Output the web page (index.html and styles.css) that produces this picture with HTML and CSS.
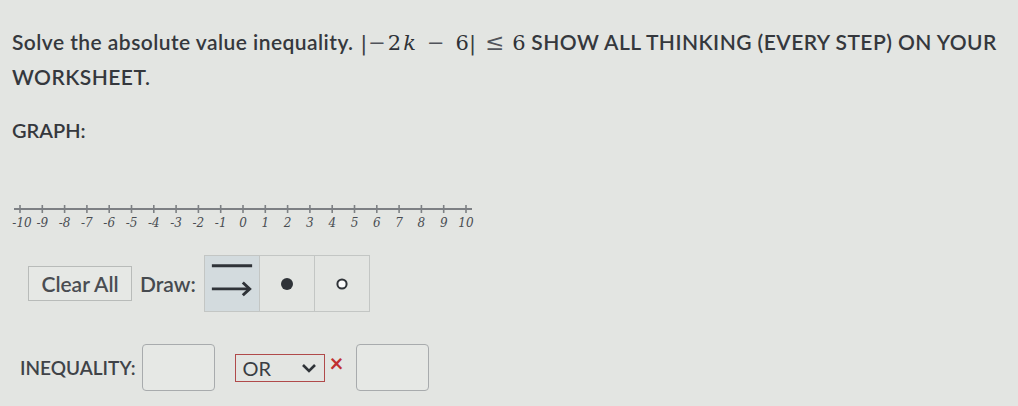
FILE: index.html
```html
<!DOCTYPE html>
<html>
<head>
<meta charset="utf-8">
<link rel="stylesheet" href="styles.css">
</head>
<body>
<div class="page">
  <p class="question">Solve the absolute value inequality. <span class="math"><span class="bar">|</span><span class="neg">−</span>2<i>k</i><span class="bin">−</span>6<span class="bar">|</span><span class="rel">≤</span>6</span> SHOW ALL THINKING (EVERY STEP) ON YOUR WORKSHEET.</p>
  <p class="label graph-label">GRAPH:</p>
  <div class="numberline">
    <svg width="470" height="40" viewBox="0 0 470 40">
      <line x1="2" y1="8" x2="460" y2="8" stroke="#7d8084" stroke-width="2"/>
      <g stroke="#7d8084" stroke-width="1.6">
        <line x1="8" y1="4" x2="8" y2="12"/><line x1="30.3" y1="4" x2="30.3" y2="12"/><line x1="52.6" y1="4" x2="52.6" y2="12"/><line x1="74.9" y1="4" x2="74.9" y2="12"/><line x1="97.2" y1="4" x2="97.2" y2="12"/><line x1="119.5" y1="4" x2="119.5" y2="12"/><line x1="141.8" y1="4" x2="141.8" y2="12"/><line x1="164.1" y1="4" x2="164.1" y2="12"/><line x1="186.4" y1="4" x2="186.4" y2="12"/><line x1="208.7" y1="4" x2="208.7" y2="12"/><line x1="231" y1="4" x2="231" y2="12"/><line x1="253.3" y1="4" x2="253.3" y2="12"/><line x1="275.6" y1="4" x2="275.6" y2="12"/><line x1="297.9" y1="4" x2="297.9" y2="12"/><line x1="320.2" y1="4" x2="320.2" y2="12"/><line x1="342.5" y1="4" x2="342.5" y2="12"/><line x1="364.8" y1="4" x2="364.8" y2="12"/><line x1="387.1" y1="4" x2="387.1" y2="12"/><line x1="409.4" y1="4" x2="409.4" y2="12"/><line x1="431.7" y1="4" x2="431.7" y2="12"/><line x1="454" y1="4" x2="454" y2="12"/>
      </g>
      <g class="nl-text" text-anchor="middle">
        <text x="10" y="26">-10</text><text x="30.3" y="26">-9</text><text x="52.6" y="26">-8</text><text x="74.9" y="26">-7</text><text x="97.2" y="26">-6</text><text x="119.5" y="26">-5</text><text x="141.8" y="26">-4</text><text x="164.1" y="26">-3</text><text x="186.4" y="26">-2</text><text x="208.7" y="26">-1</text><text x="231" y="26">0</text><text x="253.3" y="26">1</text><text x="275.6" y="26">2</text><text x="297.9" y="26">3</text><text x="320.2" y="26">4</text><text x="342.5" y="26">5</text><text x="364.8" y="26">6</text><text x="387.1" y="26">7</text><text x="409.4" y="26">8</text><text x="431.7" y="26">9</text><text x="454" y="26">10</text>
      </g>
    </svg>
  </div>
  <div class="tools">
    <button class="clear">Clear All</button>
    <span class="draw-label">Draw:</span>
    <div class="draw-group">
      <div class="draw-btn active">
        <svg width="55" height="55" viewBox="0 0 55 55">
          <line x1="7" y1="9.5" x2="48" y2="9.5" stroke="#2f3338" stroke-width="3"/>
          <line x1="7" y1="33" x2="45" y2="33" stroke="#2f3338" stroke-width="3"/>
          <polyline points="38.5,26.5 45.5,33 38.5,39.5" fill="none" stroke="#2f3338" stroke-width="3" stroke-linejoin="miter"/>
        </svg>
      </div>
      <div class="draw-btn">
        <svg width="20" height="20" viewBox="0 0 20 20"><circle cx="10" cy="10" r="6" fill="#2f3338"/></svg>
      </div>
      <div class="draw-btn">
        <svg width="20" height="20" viewBox="0 0 20 20"><circle cx="10" cy="10" r="4.6" fill="#fbfbfb" stroke="#2f3338" stroke-width="2"/></svg>
      </div>
    </div>
  </div>
  <div class="ineq">
    <span class="label">INEQUALITY:</span>
    <div class="inbox"></div>
    <div class="select">OR
      <svg width="16" height="10" viewBox="0 0 16 10"><polyline points="2,2 8,8 14,2" fill="none" stroke="#2f3338" stroke-width="2.6"/></svg>
    </div>
    <span class="xmark">×</span>
    <div class="inbox"></div>
  </div>
</div>
</body>
</html>
```

FILE: styles.css
```css
html, body {
  margin: 0;
  padding: 0;
}
body {
  background: #e3e5e2;
  width: 1018px;
  height: 406px;
  overflow: hidden;
  font-family: Lato, "Open Sans", sans-serif;
  color: #35383d;
}
.page {
  padding: 25px 12px 0 12px;
}
.question {
  margin: 0;
  font-size: 21px;
  line-height: 33px;
  font-weight: 600;
  width: 995px;
  letter-spacing: 0.45px;
}
.math {
  font-family: "DejaVu Serif", "Liberation Serif", serif;
  font-weight: normal;
  font-size: 21px;
  letter-spacing: 0;
  margin-left: 1px;
  color: #2f3237;
}
.math i {
  font-style: italic;
  margin-left: 2px;
}
.neg {
  color: #50535a;
  margin: 0 2px 0 1px;
}
.bin {
  color: #50535a;
  margin: 0 11px 0 11px;
}
.rel {
  color: #50535a;
  margin: 0 8px 0 9px;
  font-size: 23px;
}
.bar {
  color: #3a3d42;
}
.label {
  font-size: 19px;
  font-weight: 600;
}
.graph-label {
  margin: 25px 0 0 0;
  line-height: 24px;
  font-size: 20px;
}
.numberline {
  margin: 59px 0 0 0;
  height: 40px;
}
.numberline svg {
  display: block;
  overflow: visible;
}
.nl-text text {
  font-family: "DejaVu Serif", serif;
  font-style: italic;
  font-size: 12px;
  fill: #4a4d52;
}
.tools {
  display: flex;
  align-items: center;
  margin: 14px 0 0 16px;
}
.clear {
  font-family: Lato, sans-serif;
  font-size: 21px;
  font-weight: 600;
  color: #4a4d52;
  background: #e6e8e5;
  border: 1.5px solid #b8bbb9;
  width: 104px;
  height: 35px;
  padding: 0;
  margin-right: 8px;
}
.draw-label {
  margin-right: 8px;
  font-size: 21px;
  font-weight: 600;
  color: #464a4f;
}
.draw-group {
  display: flex;
  border: 1.5px solid #c3c6c4;
}
.draw-btn {
  width: 54px;
  height: 55px;
  display: flex;
  align-items: center;
  justify-content: center;
  border-left: 1.5px solid #c3c6c4;
}
.draw-btn:first-child {
  border-left: none;
}
.draw-btn.active {
  background: #d3dbde;
}
.ineq {
  display: flex;
  align-items: center;
  margin: 32px 0 0 8px;
}
.ineq .label {
  margin-right: 6px;
  color: #404348;
}
.inbox {
  width: 71px;
  height: 45px;
  border: 1.5px solid #a8abad;
  border-radius: 4px;
  background: #e6e8e5;
}
.select {
  margin-left: 20px;
  width: 90px;
  height: 28px;
  border: 1.5px solid #b04a4a;
  display: flex;
  align-items: center;
  justify-content: space-between;
  padding: 0 7px 0 7px;
  box-sizing: border-box;
  font-size: 20px;
  color: #3a3d42;
}
.xmark {
  color: #c03030;
  font-size: 24px;
  font-weight: 700;
  margin: -10px 13px 0 5px;
}
```
